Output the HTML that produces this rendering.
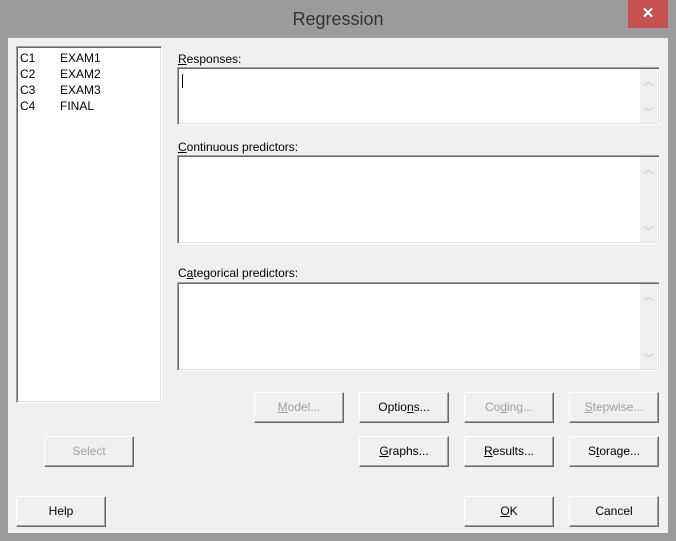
<!DOCTYPE html><html><head><style>
body{margin:0;width:676px;height:541px;background:#9b9b9b;font-family:"Liberation Sans",sans-serif;font-size:12px;position:relative;overflow:hidden}
.title{position:absolute;left:0;top:9px;width:676px;text-align:center;font-size:18px;color:#333}
.close{position:absolute;left:628px;top:0;width:40px;height:28px;background:#c75050;color:#fff;text-align:center;font-size:15px;font-weight:bold;line-height:27px}
.client{position:absolute;left:8px;top:38px;width:660px;height:495px;background:#f0f0f0}
.sunk{position:absolute;background:#fff;border:1px solid;border-color:#a0a0a0 #fff #fff #a0a0a0;box-shadow:inset 1px 1px 0 #696969,inset -1px -1px 0 #e3e3e3}
.btn{position:absolute;width:88px;height:29px;background:#f0f0f0;border:1px solid;border-color:#fff #696969 #696969 #fff;box-shadow:inset -1px -1px 0 #a0a0a0;text-align:center;line-height:29px;color:#000}
.dis{color:#a0a0a0}
.lbl{position:absolute;color:#000}
.sb{position:absolute;width:17px;background:#f0f0f0;color:#c0c0c0;font-size:10px;text-align:center}
.row{position:absolute;left:20px}
</style></head><body>
<div class="title">Regression</div>
<div class="close">✕</div>
<div class="client"></div>
<div class="sunk" style="left:16px;top:46px;width:144px;height:355px"></div>
<div class="row" style="top:51px">C1</div><div class="row" style="top:51px;left:60px">EXAM1</div>
<div class="row" style="top:67px">C2</div><div class="row" style="top:67px;left:60px">EXAM2</div>
<div class="row" style="top:83px">C3</div><div class="row" style="top:83px;left:60px">EXAM3</div>
<div class="row" style="top:99px">C4</div><div class="row" style="top:99px;left:60px">FINAL</div>
<div class="lbl" style="left:178px;top:52px"><u>R</u>esponses:</div>
<div class="sunk" style="left:177px;top:67px;width:481px;height:56px"></div>
<div class="sb" style="left:640px;top:69px;height:54px"><div style="margin-top:4px">︿</div><div style="margin-top:16px">﹀</div></div>
<div style="position:absolute;left:182px;top:74px;width:1px;height:14px;background:#000"></div>
<div class="lbl" style="left:178px;top:140px"><u>C</u>ontinuous predictors:</div>
<div class="sunk" style="left:177px;top:155px;width:481px;height:87px"></div>
<div class="sb" style="left:640px;top:157px;height:85px"><div style="margin-top:4px">︿</div><div style="margin-top:47px">﹀</div></div>
<div class="lbl" style="left:178px;top:266px">C<u>a</u>tegorical predictors:</div>
<div class="sunk" style="left:177px;top:282px;width:481px;height:87px"></div>
<div class="sb" style="left:640px;top:284px;height:85px"><div style="margin-top:4px">︿</div><div style="margin-top:47px">﹀</div></div>
<div class="btn dis" style="left:254px;top:392px"><u>M</u>odel...</div>
<div class="btn" style="left:359px;top:392px">Optio<u>n</u>s...</div>
<div class="btn dis" style="left:464px;top:392px">Co<u>d</u>ing...</div>
<div class="btn dis" style="left:569px;top:392px"><u>S</u>tepwise...</div>
<div class="btn dis" style="left:44px;top:436px">Select</div>
<div class="btn" style="left:359px;top:436px"><u>G</u>raphs...</div>
<div class="btn" style="left:464px;top:436px"><u>R</u>esults...</div>
<div class="btn" style="left:569px;top:436px">S<u>t</u>orage...</div>
<div class="btn" style="left:16px;top:496px">Help</div>
<div class="btn" style="left:464px;top:496px"><u>O</u>K</div>
<div class="btn" style="left:569px;top:496px">Cancel</div>
</body></html>
